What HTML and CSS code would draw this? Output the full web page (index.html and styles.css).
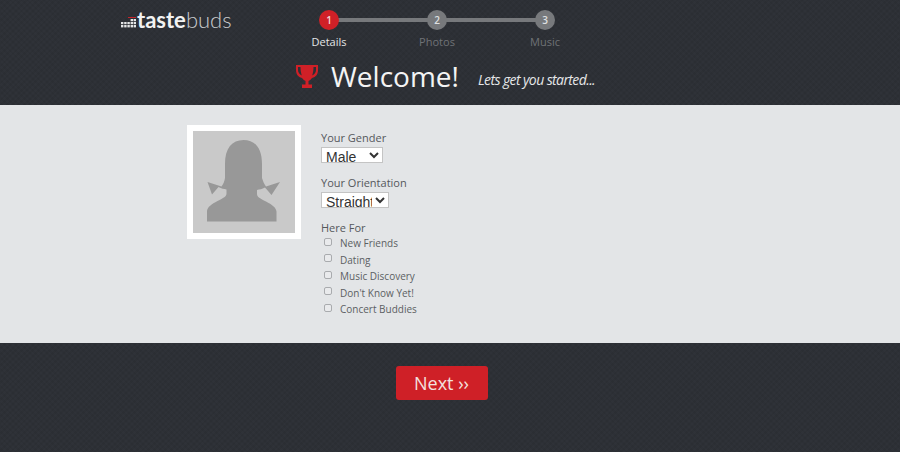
FILE: index.html
```html
<!DOCTYPE html>
<html lang="en">
<head>
    <meta charset="UTF-8">
    <meta name="viewport" content="width=device-width, initial-scale=1.0">
    <title>Tastebuds - Welcome</title>
    <link rel="stylesheet" href="styles.css">
</head>
<body>
    <!-- Header: logo, steps and title -->
    <header class="top">
        <div class="top-row">
            <div class="logo">
                <svg class="logo-bars" width="15" height="11" viewBox="0 0 15 11">
                    <g fill="#e4e5e6">
                        <rect x="0" y="8" width="2.4" height="2.4"/>
                        <rect x="3.2" y="8" width="2.4" height="2.4"/>
                        <rect x="6.4" y="8" width="2.4" height="2.4"/>
                        <rect x="9.6" y="8" width="2.4" height="2.4"/>
                        <rect x="12.6" y="8" width="2.4" height="2.4"/>
                        <rect x="0" y="5" width="2.4" height="2.2"/>
                        <rect x="3.2" y="5" width="2.4" height="2.2"/>
                        <rect x="6.4" y="5" width="2.4" height="2.2"/>
                        <rect x="9.6" y="5" width="2.4" height="2.2"/>
                        <rect x="12.6" y="5" width="2.4" height="2.2"/>
                        <rect x="9.6" y="2" width="2.4" height="2.2"/>
                        <rect x="12.6" y="2" width="2.4" height="2.2"/>
                    </g>
                    <rect x="7" y="0" width="8" height="1" fill="#c5242b"/>
                </svg>
                <span class="logo-taste">taste</span><span class="logo-buds">buds</span>
            </div>
            <ol class="steps">
                <li class="step active"><span class="step-num">1</span><span class="step-label">Details</span></li>
                <li class="step"><span class="step-num">2</span><span class="step-label">Photos</span></li>
                <li class="step"><span class="step-num">3</span><span class="step-label">Music</span></li>
            </ol>
        </div>
        <div class="title-row">
            <svg class="trophy" width="24" height="25" viewBox="0 0 24 25">
                <path fill="#cf2027" d="M1 1h22v5c0 4-2 7-6 8-1 1.500-2.500 2.500-3.500 3v3.500h3.500V24H7v-3.500h3.500V17c-1-.5-2.500-1.500-3.500-3C3 13 1 10 1 6z"/>
                <path fill="#2d3036" d="M3 3h2.500c0 3 .5 6 1.300 8.500C4.500 10.500 3 8.500 3 6zM21 3h-2.500c0 3-.5 6-1.300 8.500 2.300-1 3.800-3 3.800-5.500z"/>
            </svg>
            <h1>Welcome!</h1>
            <p class="tagline">Lets get you started...</p>
        </div>
    </header>

    <!-- Profile form -->
    <main class="panel">
        <div class="avatar">
            <svg width="102" height="102" viewBox="0 0 102 102">
                <rect width="102" height="102" fill="#c9c9c9"/>
                <path fill="#989898" d="M32 33C32 17 39 9 50.500 9S69 17 69 33v14c1 3 2 6 4 8.500l14-4.500-8.500 13-6.500-7.500c-3 1.500-5.500 2-8 2.500v4c0 3 3 4.500 9 7.500 6 3 10 6 10.500 10v10H14V80c.5-4 4.500-7 10.500-10 6-3 9-4.500 9-7.500v-4c-2.500-.5-5-1-8-2.500L19 63.500 14.500 51l14 4.500c2-2.500 3-5.500 3.500-8.500z"/>
            </svg>
        </div>
        <form class="fields">
            <label class="field-label" for="gender">Your Gender</label>
            <select id="gender" class="pick pick-gender"><option>Male</option><option>Female</option></select>
            <label class="field-label gap" for="orientation">Your Orientation</label>
            <select id="orientation" class="pick pick-orient"><option>Straight</option><option>Gay</option><option>Bisexual</option></select>
            <div class="field-label gap">Here For</div>
            <label class="check"><input type="checkbox">New Friends</label>
            <label class="check"><input type="checkbox">Dating</label>
            <label class="check"><input type="checkbox">Music Discovery</label>
            <label class="check"><input type="checkbox">Don't Know Yet!</label>
            <label class="check"><input type="checkbox">Concert Buddies</label>
        </form>
    </main>

    <footer class="bottom">
        <button class="next" type="button">Next &rsaquo;&rsaquo;</button>
    </footer>
</body>
</html>
```

FILE: styles.css
```css
/* General */
html, body {
    height: 100%;
}

body {
    margin: 0;
    display: flex;
    flex-direction: column;
    overflow: hidden;
    font-family: "Open Sans", sans-serif;
    color: #55585c;
    background-color: #2d3036;
    background-image:
        repeating-linear-gradient(45deg, rgba(255, 255, 255, 0.012) 0 2px, transparent 2px 4px),
        repeating-linear-gradient(-45deg, rgba(0, 0, 0, 0.05) 0 2px, transparent 2px 4px);
}

/* Header */
.top {
    height: 105px;
    box-sizing: border-box;
}

.top-row {
    display: flex;
    padding-left: 121px;
}

.logo {
    width: 154px;
    padding-top: 5px;
    display: flex;
    align-items: baseline;
    font-family: Lato, sans-serif;
    font-size: 22px;
    line-height: 30px;
    color: #f2f2f2;
}

.logo-bars {
    margin-right: 1px;
}

.logo-taste {
    font-weight: 700;
}

.logo-buds {
    font-weight: 300;
    color: #c8cacc;
}

/* Steps */
.steps {
    display: flex;
    margin: 0;
    padding: 10px 0 0;
    list-style: none;
}

.step {
    position: relative;
    width: 108px;
    display: flex;
    flex-direction: column;
    align-items: center;
}

.step + .step::before {
    content: "";
    position: absolute;
    top: 8px;
    left: -54px;
    width: 108px;
    height: 4px;
    background: #77797c;
}

.step-num {
    position: relative;
    z-index: 1;
    width: 20px;
    height: 20px;
    border-radius: 50%;
    background: #77797c;
    color: #dfe0e1;
    font-size: 10px;
    font-weight: 600;
    line-height: 20px;
    text-align: center;
}

.step-label {
    margin-top: 4px;
    font-size: 11px;
    line-height: 15px;
    color: #6f7276;
}

.active .step-num {
    background: #d02027;
    color: #f3d6d7;
}

.active .step-label {
    color: #e4e5e6;
}

/* Title */
.title-row {
    display: flex;
    align-items: center;
    padding: 10px 0 0 295px;
}

.trophy {
    margin-right: 12px;
}

h1 {
    margin: 0;
    font-size: 28px;
    font-weight: 400;
    line-height: 34px;
    color: #f4f4f4;
}

.tagline {
    margin: 7px 0 0 19px;
    font-size: 14px;
    font-style: italic;
    letter-spacing: -0.6px;
    color: #e6e7e8;
}

/* Panel */
.panel {
    height: 238px;
    box-sizing: border-box;
    padding: 20px 0 0 187px;
    display: flex;
    align-items: flex-start;
    gap: 20px;
    background: #e3e5e7;
}

.avatar {
    display: flex;
    padding: 6px;
    background: #fff;
}

.fields {
    display: flex;
    flex-direction: column;
    align-items: flex-start;
}

.field-label {
    margin-top: 5px;
    font-size: 11px;
    line-height: 15px;
}

.gap {
    margin-top: 12px;
}

.pick {
    margin: 2px 0 0;
    height: 16px;
    padding: 0;
    font-family: "Liberation Sans", sans-serif;
    font-size: 14px;
    color: #333;
    background-color: #fff;
    border: 1px solid #c4c4c4;
}

.pick-gender {
    width: 62px;
}

.pick-orient {
    width: 68px;
}

.check {
    display: flex;
    align-items: center;
    height: 16.500px;
    font-size: 10px;
    color: #5c5f63;
}

.check input {
    appearance: none;
    width: 8px;
    height: 8px;
    margin: -3px 8px 0 3px;
    border: 1px solid #a9abae;
    border-radius: 2px;
    background: #e9eaec;
}

/* Footer */
.bottom {
    flex: 1;
    display: flex;
    justify-content: center;
    align-items: flex-start;
    padding-top: 23px;
    padding-right: 17px;
}

.next {
    width: 92px;
    height: 34px;
    padding: 0;
    border: 0;
    border-radius: 3px;
    background: #cf2027;
    color: #f3e0df;
    font-family: "Open Sans", sans-serif;
    font-size: 18px;
}
```
